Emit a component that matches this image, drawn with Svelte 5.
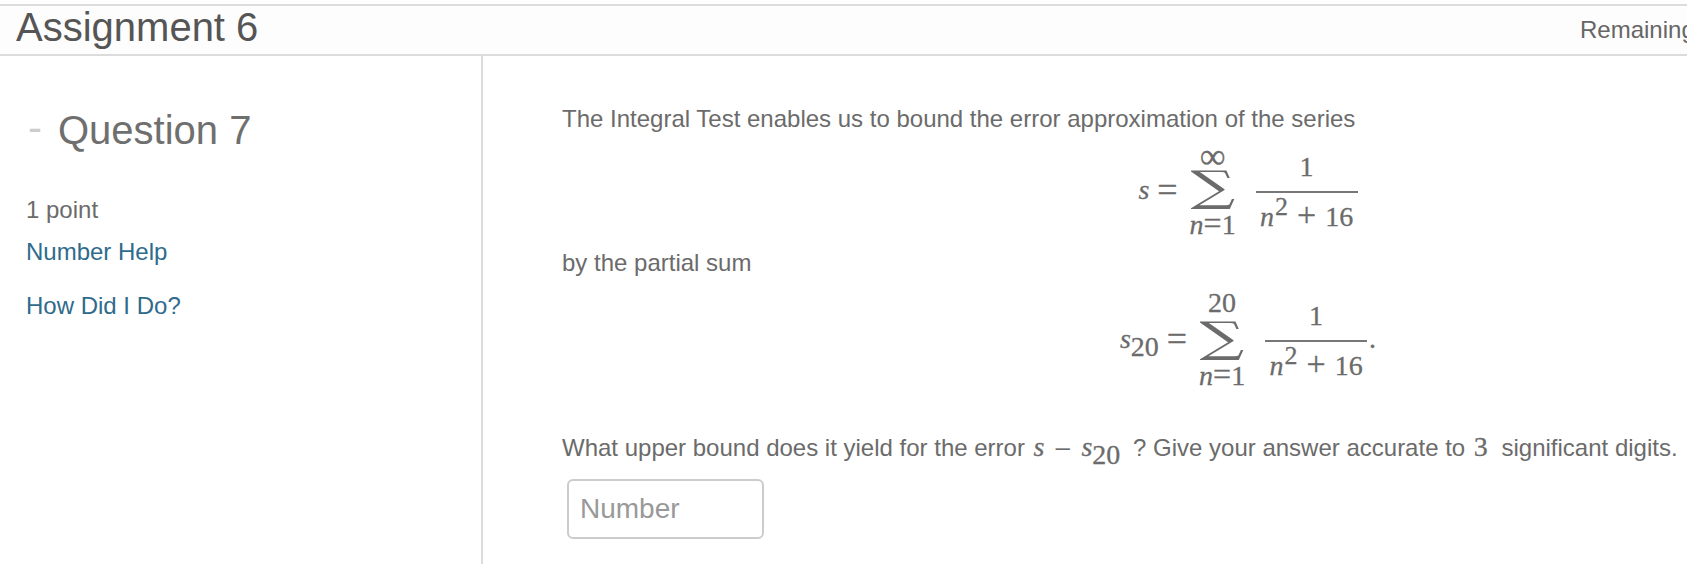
<script>
    const displays = [
        { lhs: "s", sub: "", top: "∞", end: "" },
        { lhs: "s", sub: "20", top: "20", end: "." },
    ];
</script>

<div class="page">
    <header>
        <h1>Assignment 6</h1>
        <div class="remaining">Remaining</div>
    </header>

    <div class="columns">
        <aside>
            <h2><span class="dash">-</span>Question 7</h2>
            <p class="points">1 point</p>
            <a href="#help" class="help">Number Help</a>
            <a href="#how" class="how">How Did I Do?</a>
        </aside>

        <main>
            <p class="line first">The Integral Test enables us to bound the error approximation of the series</p>
            {@render display(displays[0])}
            <p class="line partial">by the partial sum</p>
            {@render display(displays[1])}
            <p class="line question">
                What upper bound does it yield for the error
                <span class="math"><i>s</i><span class="minus">−</span><i>s</i><sub>20</sub></span>
                <span class="mark">?</span> Give your answer accurate to <span class="math three">3</span> significant digits.
            </p>
            <input type="text" placeholder="Number" />
        </main>
    </div>
</div>

{#snippet display(d)}
    <div class="display">
        <span class="lhs"><i>{d.lhs}</i>{#if d.sub}<sub>{d.sub}</sub>{/if}</span>
        <span class="eq">=</span>
        <span class="sum">
            <span class="limit" class:inf={d.top === "∞"}>{d.top}</span>
            <span class="sigma">∑</span>
            <span class="limit lower"><i>n</i><span class="small-eq">=</span>1</span>
        </span>
        <span class="frac">
            <span class="num">1</span>
            <span class="den"><i>n</i><sup>2</sup><span class="plus">+</span>16</span>
        </span>
        {#if d.end}<span class="end">{d.end}</span>{/if}
    </div>
{/snippet}

<style>
    :global(body) {
        margin: 0;
        background: #fff;
        overflow: hidden;
    }
    .page {
        width: 1687px;
        height: 564px;
        overflow: hidden;
        font-family: "Liberation Sans", Arial, sans-serif;
        color: #6b6b6b;
    }
    header {
        display: flex;
        align-items: center;
        justify-content: space-between;
        margin-top: 4px;
        height: 48px;
        background: #fdfdfd;
        border-top: 2px solid #dcdcdc;
        border-bottom: 2px solid #dcdcdc;
        padding-left: 16px;
    }
    h1 {
        margin: -6px 0 0;
        font-size: 40px;
        line-height: 40px;
        font-weight: 400;
        color: #555;
    }
    .remaining {
        width: 107px;
        overflow: hidden;
        white-space: nowrap;
        font-size: 24px;
        color: #666;
    }
    .columns {
        display: flex;
        height: 508px;
    }
    aside {
        width: 483px;
        flex: none;
        box-sizing: border-box;
        border-right: 2px solid #dcdcdc;
        padding: 51px 0 0 26px;
    }
    h2 {
        margin: 0;
        font-size: 40px;
        line-height: 46px;
        font-weight: 400;
        color: #6f6f6f;
    }
    .dash {
        color: #ccc;
        font-size: 42px;
        line-height: 0;
        font-weight: 400;
        display: inline-block;
        width: 32px;
        padding-left: 2px;
        box-sizing: border-box;
        vertical-align: 2px;
    }
    .points {
        margin: 44px 0 0;
        font-size: 24px;
        line-height: 26px;
    }
    aside a {
        display: block;
        font-size: 24px;
        line-height: 26px;
        color: #2f6b8c;
        text-decoration: none;
    }
    .help {
        margin-top: 16px;
    }
    .how {
        margin-top: 28px;
    }
    main {
        width: 1372px;
        flex: none;
        padding: 0 0 0 79px;
        font-size: 24px;
    }
    .line {
        margin: 0;
        line-height: 26px;
        white-space: nowrap;
    }
    .first {
        margin-top: 50px;
    }
    .partial {
        margin: 8px 0 11px;
    }
    .question {
        margin-top: 44px;
    }
    .math {
        font-family: "Liberation Serif", serif;
        font-size: 28px;
        line-height: 0;
        margin-left: 2px;
        -webkit-text-stroke: 0.3px #6b6b6b;
    }
    .math sub {
        font-size: 28px;
        line-height: 0;
        vertical-align: -8px;
    }
    .minus {
        font-size: 30px;
        line-height: 0;
        margin: 0 10px;
        vertical-align: -3px;
    }
    .mark {
        margin-left: 6px;
    }
    .three {
        margin: 0 7px 0 2px;
    }
    .display {
        display: flex;
        justify-content: center;
        align-items: center;
        height: 104px;
        margin-top: 6px;
        font-family: "Liberation Serif", serif;
        font-size: 28px;
        -webkit-text-stroke: 0.3px #6b6b6b;
    }
    .lhs sub {
        font-size: 28px;
        line-height: 0;
        vertical-align: -8px;
    }
    .eq {
        margin: 0 8px;
        font-size: 36px;
        line-height: 36px;
    }
    .sum {
        display: flex;
        flex-direction: column;
        align-items: center;
        width: 54px;
    }
    .limit {
        height: 24px;
        line-height: 24px;
        white-space: nowrap;
    }
    .inf {
        font-size: 36px;
        margin-bottom: -4px;
    }
    .lower {
        margin-top: -1px;
    }
    .small-eq {
        font-size: 32px;
        line-height: 0;
    }
    .sigma {
        font-family: "DejaVu Serif", serif;
        font-size: 50px;
        line-height: 50px;
        -webkit-text-stroke: 0;
        transform: translateY(-2px) scale(1.25, 0.85);
    }
    .frac {
        display: flex;
        flex-direction: column;
        align-items: center;
        margin-left: 16px;
        padding-top: 10px;
    }
    .num {
        line-height: 34px;
        padding-bottom: 7px;
        border-bottom: 2px solid #777;
        width: 102px;
        text-align: center;
    }
    .den {
        line-height: 48px;
        white-space: nowrap;
    }
    .den sup {
        font-size: 26px;
        line-height: 0;
        vertical-align: 11px;
        margin-left: 1px;
    }
    .plus {
        font-size: 34px;
        line-height: 0;
        margin: 0 9px;
    }
    .end {
        margin-left: 2px;
    }
    input {
        display: block;
        box-sizing: border-box;
        width: 197px;
        height: 60px;
        margin: 18px 0 0 5px;
        padding: 0 11px;
        border: 2px solid #ccc;
        border-radius: 6px;
        font-family: inherit;
        font-size: 28px;
        outline: none;
    }
    input::placeholder {
        color: #999;
        opacity: 1;
    }
</style>
